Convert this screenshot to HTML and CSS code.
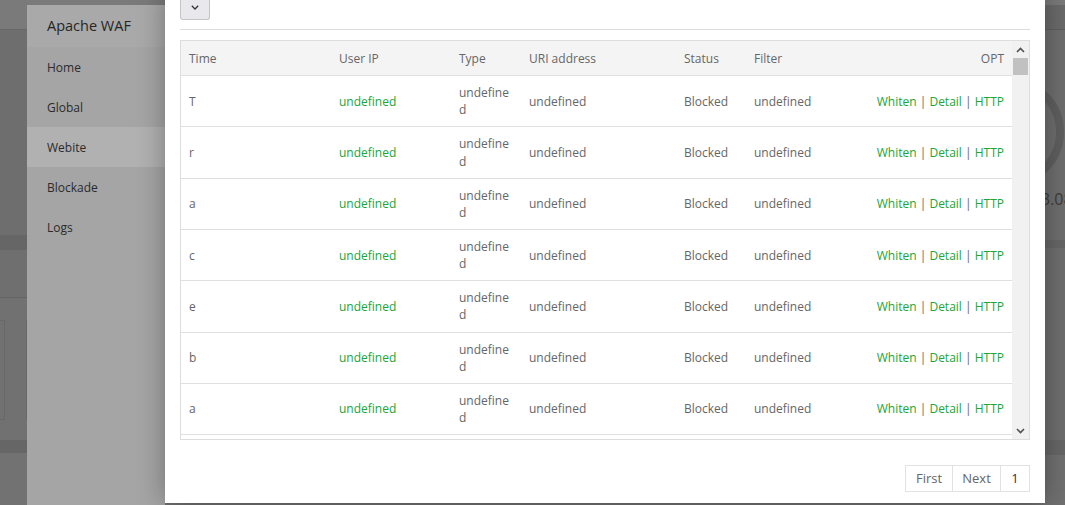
FILE: index.html
```html
<!DOCTYPE html>
<html>
<head>
<meta charset="utf-8">
<title>Apache WAF</title>
<link rel="stylesheet" href="styles.css">
</head>
<body>
<div class="panel">
  <div class="p-top"></div>
  <div class="p-stats"></div>
  <div class="p-band"></div>
  <div class="p-title"></div>
  <div class="p-body"><div class="p-card c1"></div><div class="p-card c2"></div></div>
  <div class="p-band2"></div>
  <div class="p-rest"></div>
</div>

<div class="plugin">
  <aside class="sidebar">
    <div class="brand">Apache WAF</div>
    <div class="nav-item">Home</div>
    <div class="nav-item">Global</div>
    <div class="nav-item active">Webite</div>
    <div class="nav-item">Blockade</div>
    <div class="nav-item">Logs</div>
  </aside>
  <div class="plug-main">
    <div class="pm-top"></div>
    <div class="pm-stats">
      <div class="gauge">
        <div class="ring"></div>
        <div class="gauge-label">3.08</div>
      </div>
    </div>
    <div class="pm-band"></div>
    <div class="pm-body"></div>
    <div class="pm-band2"></div>
    <div class="pm-rest"></div>
  </div>
</div>

<div class="modal">
  <div class="select">
    <svg width="8" height="5" viewBox="0 0 8 5"><path d="M0.8 0.8L4 4L7.2 0.8" fill="none" stroke="#333" stroke-width="1.3"/></svg>
  </div>
  <div class="rule"></div>
  <div class="table-wrap">
    <div class="table-scroll">
      <table class="log-table">
        <colgroup>
          <col class="w-time"><col class="w-ip"><col class="w-type"><col class="w-uri"><col class="w-status"><col class="w-filter"><col class="w-opt">
        </colgroup>
        <thead>
          <tr><th>Time</th><th>User IP</th><th>Type</th><th>URI address</th><th>Status</th><th>Filter</th><th class="opt">OPT</th></tr>
        </thead>
        <tbody>
          <tr><td>T</td><td class="green">undefined</td><td class="brk">undefined</td><td>undefined</td><td>Blocked</td><td>undefined</td><td class="opt"><a>Whiten</a> | <a>Detail</a> | <a>HTTP</a></td></tr>
          <tr><td>r</td><td class="green">undefined</td><td class="brk">undefined</td><td>undefined</td><td>Blocked</td><td>undefined</td><td class="opt"><a>Whiten</a> | <a>Detail</a> | <a>HTTP</a></td></tr>
          <tr><td>a</td><td class="green">undefined</td><td class="brk">undefined</td><td>undefined</td><td>Blocked</td><td>undefined</td><td class="opt"><a>Whiten</a> | <a>Detail</a> | <a>HTTP</a></td></tr>
          <tr><td>c</td><td class="green">undefined</td><td class="brk">undefined</td><td>undefined</td><td>Blocked</td><td>undefined</td><td class="opt"><a>Whiten</a> | <a>Detail</a> | <a>HTTP</a></td></tr>
          <tr><td>e</td><td class="green">undefined</td><td class="brk">undefined</td><td>undefined</td><td>Blocked</td><td>undefined</td><td class="opt"><a>Whiten</a> | <a>Detail</a> | <a>HTTP</a></td></tr>
          <tr><td>b</td><td class="green">undefined</td><td class="brk">undefined</td><td>undefined</td><td>Blocked</td><td>undefined</td><td class="opt"><a>Whiten</a> | <a>Detail</a> | <a>HTTP</a></td></tr>
          <tr><td>a</td><td class="green">undefined</td><td class="brk">undefined</td><td>undefined</td><td>Blocked</td><td>undefined</td><td class="opt"><a>Whiten</a> | <a>Detail</a> | <a>HTTP</a></td></tr>
          <tr><td>c</td><td class="green">undefined</td><td class="brk">undefined</td><td>undefined</td><td>Blocked</td><td>undefined</td><td class="opt"><a>Whiten</a> | <a>Detail</a> | <a>HTTP</a></td></tr>
        </tbody>
      </table>
    </div>
    <div class="vscroll">
      <div class="sb-btn">
        <svg width="9" height="6" viewBox="0 0 9 6"><path d="M1 5L4.5 1.5L8 5" fill="none" stroke="#505050" stroke-width="1.6"/></svg>
      </div>
      <div class="sb-thumb"></div>
      <div class="sb-track"></div>
      <div class="sb-btn">
        <svg width="9" height="6" viewBox="0 0 9 6"><path d="M1 1L4.5 4.5L8 1" fill="none" stroke="#505050" stroke-width="1.6"/></svg>
      </div>
    </div>
  </div>
  <div class="pager">
    <span class="pg pg-first">First</span><span class="pg pg-next">Next</span><span class="pg pg-num">1</span>
  </div>
</div>
</body>
</html>
```

FILE: styles.css
```css
html, body {
  margin: 0;
  padding: 0;
  width: 1065px;
  height: 505px;
  overflow: hidden;
  font-family: "Open Sans", "Noto Sans", Arial, sans-serif;
}
body {
  position: relative;
  background: #6e6e6e;
}

/* ---------- background panel (dimmed) ---------- */
.panel {
  display: flex;
  flex-direction: column;
  height: 505px;
}
.p-top { height: 29px; background: #7a7a7a; border-bottom: 1px solid #686868; }
.p-stats { height: 205px; background: #6e6e6e; }
.p-band { height: 15px; background: #666; }
.p-title { height: 47px; background: #6f6f6f; border-bottom: 1px solid #646464; }
.p-body {
  height: 142px;
  box-sizing: border-box;
  padding-top: 22px;
  background: #717171;
  display: flex;
  gap: 21px;
}
.p-card { height: 100px; box-sizing: border-box; border: 1px solid #686868; }
.p-card.c1 { width: 5px; border-left: none; }
.p-card.c2 { width: 300px; }
.p-band2 { height: 13px; background: #666; }
.p-rest { flex: 1; background: #727272; }

/* ---------- plugin window ---------- */
.plugin {
  position: absolute;
  left: 27px;
  top: 5px;
  right: 0;
  bottom: 0;
  display: flex;
}
.sidebar {
  width: 138px;
  flex: none;
  background: #a5a5a5;
}
.brand {
  height: 42px;
  line-height: 41px;
  padding-left: 20px;
  font-size: 14.5px;
  color: #262626;
  background: #a9a9a9;
}
.nav-item {
  height: 40px;
  box-sizing: border-box;
  padding-top: 1px;
  line-height: 40px;
  padding-left: 20px;
  font-size: 12px;
  color: #2b2b2b;
}
.nav-item.active { background: #b1b1b1; }

.plug-main {
  flex: 1;
  display: flex;
  flex-direction: column;
  overflow: hidden;
}
.pm-top { height: 24px; background: #6a6a6a; border-bottom: 1px solid #5f5f5f; flex: none; }
.pm-stats {
  height: 210px;
  flex: none;
  display: flex;
  justify-content: flex-end;
  background: #6e6e6e;
}
.gauge { width: 110px; margin-right: 1px; padding-top: 47px; }
.ring {
  width: 110px;
  height: 110px;
  box-sizing: border-box;
  border: 8px solid #5f5f5f;
  border-radius: 50%;
}
.gauge-label {
  padding-left: 87px;
  margin-top: 2px;
  white-space: nowrap;
  font-size: 16px;
  line-height: 20px;
  color: #3c3c3c;
}
.pm-band { height: 8px; flex: none; background: #666; }
.pm-body { height: 192px; flex: none; background: #6e6e6e; }
.pm-band2 { height: 15px; flex: none; background: #666; }
.pm-rest { flex: 1; background: #707070; }

/* ---------- modal ---------- */
.modal {
  position: absolute;
  left: 165px;
  top: -11px;
  width: 880px;
  box-sizing: border-box;
  padding: 0 15px 11px;
  background: #fff;
  box-shadow: 0 0 26px rgba(0, 0, 0, 0.32);
}
.select {
  width: 30px;
  height: 31px;
  box-sizing: border-box;
  border: 1px solid #c4c4c4;
  border-top: none;
  border-radius: 0 0 3px 3px;
  background: #e9e9ed;
  display: flex;
  justify-content: center;
  align-items: flex-end;
  padding-bottom: 9px;
}
.select svg { display: block; }
.rule {
  height: 1px;
  background: #dcdcdc;
  margin: 9px 0 10px;
}
.table-wrap {
  height: 400px;
  box-sizing: border-box;
  border: 1px solid #ddd;
  display: flex;
}
.table-scroll {
  flex: 1;
  overflow: hidden;
}
.log-table {
  width: 100%;
  table-layout: fixed;
  border-collapse: collapse;
  font-size: 12px;
  line-height: 1.42857;
  color: #666;
}
.w-time { width: 150px; }
.w-ip { width: 120px; }
.w-type { width: 70px; }
.w-uri { width: 155px; }
.w-status { width: 70px; }
.w-filter { width: 116px; }
.w-opt { width: 150px; }
.log-table th {
  font-weight: normal;
  text-align: left;
  padding: 9px 8px 8px;
  background: #f4f4f4;
  border-bottom: 1px solid #e0e0e0;
  white-space: nowrap;
}
.log-table td {
  padding: 8px;
  border-bottom: 1px solid #e0e0e0;
  vertical-align: middle;
}
.log-table .opt { text-align: right; white-space: nowrap; }
.log-table .green { color: #20a53a; }
.log-table .brk { word-break: break-all; }
.log-table a { color: #20a53a; text-decoration: none; }

.vscroll {
  width: 17px;
  flex: none;
  display: flex;
  flex-direction: column;
  background: #f1f1f1;
}
.sb-btn {
  height: 17px;
  display: flex;
  align-items: center;
  justify-content: center;
}
.sb-btn svg { display: block; }
.sb-thumb {
  height: 17px;
  margin: 0 1px;
  background: #c1c1c1;
}
.sb-track { flex: 1; }

.pager {
  margin-top: 25px;
  display: flex;
  justify-content: flex-end;
}
.pg {
  height: 27px;
  box-sizing: border-box;
  line-height: 25px;
  text-align: center;
  border: 1px solid #e2e2e2;
  margin-left: -1px;
  font-size: 13px;
  color: #666;
}
.pg-first { width: 48px; }
.pg-next { width: 49px; }
.pg-num { width: 30px; color: #333; }
```
